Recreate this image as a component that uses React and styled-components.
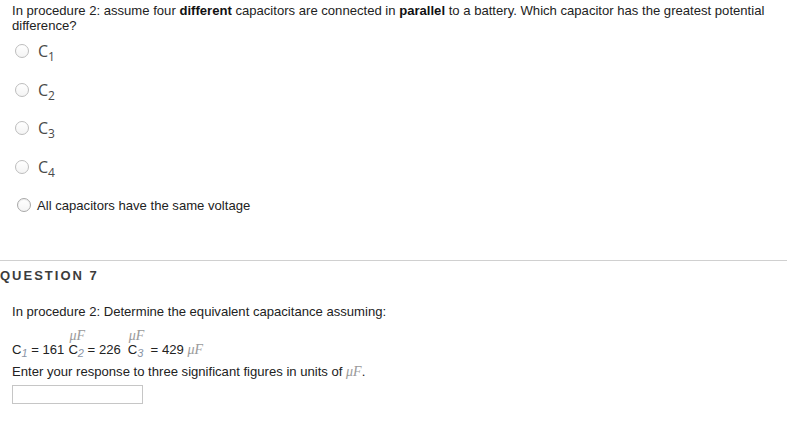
import React from 'react';
import styled, { createGlobalStyle } from 'styled-components';

const GlobalStyle = createGlobalStyle`
  html, body {
    margin: 0;
    padding: 0;
    background: #fff;
  }
  body {
    font-family: "Liberation Sans", Arial, sans-serif;
    font-size: 13.1px;
    color: #222;
  }
`;

const Page = styled.div`
  width: 787px;
  height: 424px;
  overflow: hidden;
`;

const Question = styled.div`
  padding: 3px 12px 0 12px;
`;

const Prompt = styled.p`
  margin: 0;
  line-height: 15px;
  color: #222;
  b {
    font-weight: bold;
    color: #111;
  }
`;

const Options = styled.ul`
  list-style: none;
  margin: 0;
  padding: 0;
`;

const Option = styled.li`
  height: 38.5px;
  display: flex;
  align-items: center;
  padding-left: ${p => (p.$text ? '5px' : '3px')};
  gap: ${p => (p.$text ? '6px' : '9px')};
  margin-top: ${p => (p.$first ? '-1px' : '0')};
`;

const Radio = styled.span`
  width: 12px;
  height: 12px;
  border-radius: 50%;
  border: 1px solid ${p => (p.$dark ? '#a8a8a8' : '#bdbdbd')};
  background: linear-gradient(#ffffff, #f4f4f4);
  box-shadow: ${p => (p.$dark ? 'inset 0 1px 1px rgba(0,0,0,0.08)' : 'none')};
  flex: none;
`;

const MathLabel = styled.span`
  font-family: "Open Sans", "DejaVu Sans", sans-serif;
  font-size: 16px;
  line-height: 18px;
  color: #4a4a4a;
  font-weight: 400;
  sub {
    font-size: 12px;
    vertical-align: -4px;
    line-height: 0;
  }
`;

const Divider = styled.hr`
  border: none;
  border-top: 1px solid #d0d0d0;
  margin: 35px 0 0 0;
`;

const SectionTitle = styled.h3`
  margin: 7px 0 0 0;
  font-size: 13px;
  line-height: 16px;
  font-weight: bold;
  letter-spacing: 2px;
  color: #3c3c3c;
`;

const Body = styled.div`
  padding: 0 12px;
`;

const Para = styled.p`
  margin: ${p => p.$mt || 0} 0 0 0;
  line-height: 16px;
  color: #222;
`;

const Formula = styled.div`
  margin-top: 9px;
  display: flex;
  align-items: flex-end;
  line-height: 15px;
  color: #222;
`;

const Stack = styled.span`
  display: inline-flex;
  flex-direction: column;
  align-items: flex-start;
  margin: 0 3px 0 4px;
`;

const Unit = styled.span`
  font-family: "Liberation Serif", "Times New Roman", serif;
  font-style: italic;
  font-size: 14px;
  color: #9a9a9a;
  line-height: 13px;
  padding-left: ${p => p.$pad || '0'};
`;

const Sym = styled.span`
  white-space: nowrap;
  sub {
    font-size: 11px;
    font-style: italic;
    color: #8a94a6;
    vertical-align: -3px;
    line-height: 0;
  }
`;

const Input = styled.input`
  display: block;
  margin-top: 5px;
  width: 131px;
  height: 19px;
  box-sizing: border-box;
  border: 1px solid #c6c6c6;
  padding: 0;
  background: #fff;
  outline: none;
`;

const options = ['1', '2', '3', '4'];

export default function App() {
  return (
    <Page>
      <GlobalStyle />
      <Question>
        <Prompt>
          In procedure 2: assume four <b>different</b> capacitors are connected in <b>parallel</b> to a battery. Which capacitor has the greatest potential difference?
        </Prompt>
        <Options>
          {options.map((n, i) => (
            <Option key={n} $first={i === 0}>
              <Radio />
              <MathLabel>C<sub>{n}</sub></MathLabel>
            </Option>
          ))}
          <Option $text>
            <Radio $dark />
            <span>All capacitors have the same voltage</span>
          </Option>
        </Options>
      </Question>
      <Divider />
      <SectionTitle>QUESTION 7</SectionTitle>
      <Body>
        <Para $mt="20px">In procedure 2: Determine the equivalent capacitance assuming:</Para>
        <Formula>
          <Sym>C<sub>1</sub> = 161</Sym>
          <Stack>
            <Unit $pad="1px">μF</Unit>
            <Sym>C<sub>2</sub> = 226</Sym>
          </Stack>
          <Stack>
            <Unit $pad="1px">μF</Unit>
            <Sym>C<sub>3</sub> &nbsp;= 429 <Unit>μF</Unit></Sym>
          </Stack>
        </Formula>
        <Para $mt="7px">
          Enter your response to three significant figures in units of <Unit>μF</Unit>.
        </Para>
        <Input type="text" />
      </Body>
    </Page>
  );
}
